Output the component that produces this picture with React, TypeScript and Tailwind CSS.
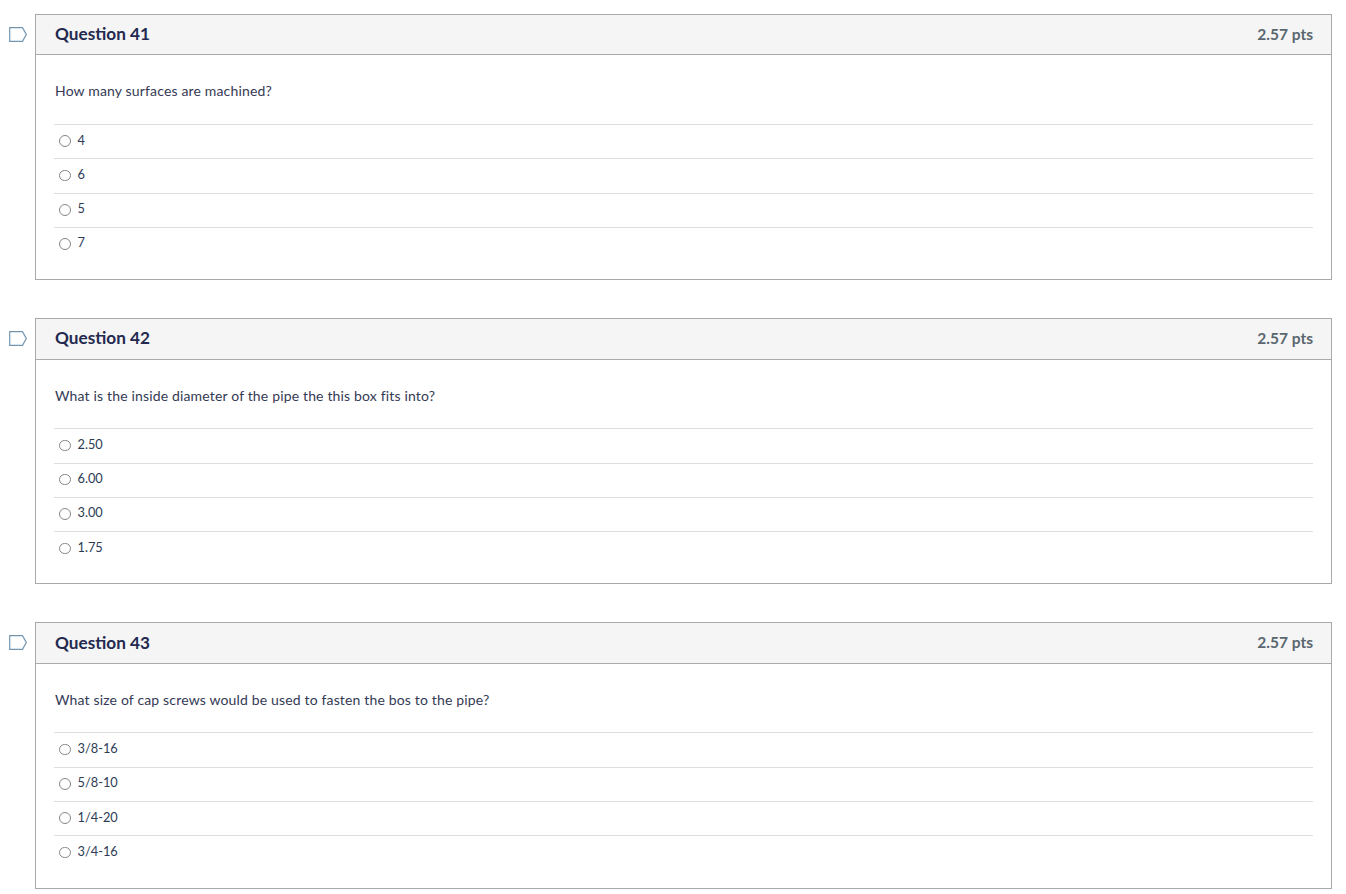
const questions = [
  {
    id: 41,
    text: "How many surfaces are machined?",
    answers: ["4", "6", "5", "7"],
  },
  {
    id: 42,
    text: "What is the inside diameter of the pipe the this box fits into?",
    answers: ["2.50", "6.00", "3.00", "1.75"],
  },
  {
    id: 43,
    text: "What size of cap screws would be used to fasten the bos to the pipe?",
    answers: ["3/8-16", "5/8-10", "1/4-20", "3/4-16"],
  },
];

const Flag = () => (
  <svg width="18" height="15" viewBox="0 0 18 15" fill="none" className="absolute left-[-27px] top-[11.5px]">
    <path d="M0.7 0.7H13.5L17.3 7.5L13.5 14.3H0.7Z" stroke="#7396b0" strokeWidth="1.2" fill="#ffffff" />
  </svg>
);

const Question = ({ question }: { question: (typeof questions)[number] }) => {
  return (
    <div className="relative h-[266.2px] w-[1297px] border border-[#aaaaaa]">
      <Flag />
      <div className="flex h-[40.4px] items-center justify-between border-b border-[#aaaaaa] bg-[#f5f5f5] pl-[19px] pr-[18px]">
        <span className="mb-[1px] text-[17.2px] font-bold text-[#23294f]">Question {question.id}</span>
        <span className="text-[15.5px] font-bold text-[#59666f]">2.57 pts</span>
      </div>
      <div className="px-[18px] pt-[27px]">
        <p className="h-[41.65px] pl-px text-sm leading-[17px] tracking-[0.16px] text-[#343a55]">{question.text}</p>
        <div>
          {question.answers.map((answer) => (
            <div key={answer} className="flex h-[34.3px] items-center border-t border-[#dddddd] pl-[5px] text-[12.8px] text-[#2d3b55]">
              <span className="mb-px size-[11.5px] rounded-full border border-[#858585] bg-white" />
              <span className="mb-[3px] ml-[7px]">{answer}</span>
            </div>
          ))}
        </div>
      </div>
    </div>
  );
};

export default function App() {
  return (
    <div className="flex h-[894px] w-[1346px] flex-col gap-[38px] overflow-hidden bg-white pl-[35px] pt-[14px] font-['Lato',sans-serif]">
      {questions.map((question) => (
        <Question key={question.id} question={question} />
      ))}
    </div>
  );
}
